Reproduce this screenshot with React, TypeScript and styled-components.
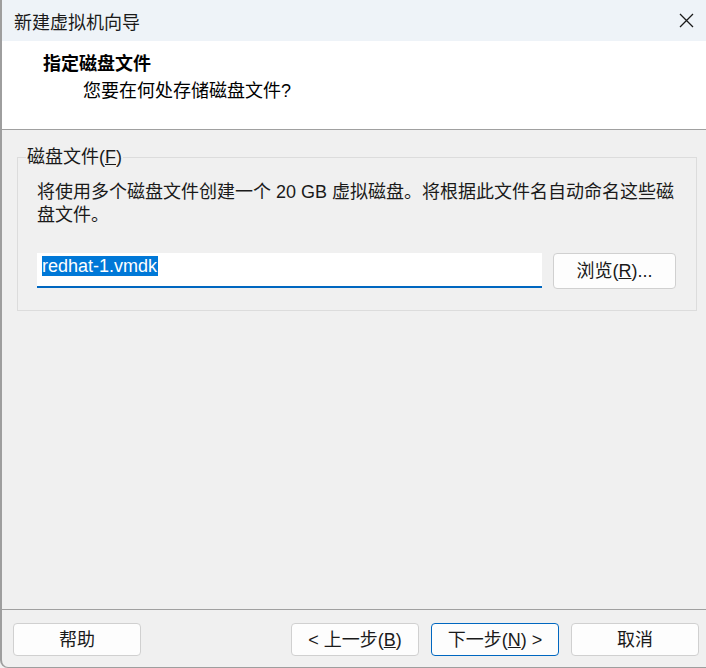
import styled, { createGlobalStyle } from "styled-components";

const GlobalStyle = createGlobalStyle`
  html, body {
    margin: 0;
    padding: 0;
    background: #f0f0f0;
  }
  * {
    box-sizing: border-box;
  }
`;

const Window = styled.div`
  width: 706px;
  height: 668px;
  display: flex;
  flex-direction: column;
  border-left: 2px solid #9e9e9e;
  border-bottom: 1px solid #9e9e9e;
  border-bottom-left-radius: 8px;
  overflow: hidden;
  background: #f0f0f0;
  color: #1a1a1a;
  font-family: "Liberation Sans", "Noto Sans CJK SC", sans-serif;
  font-size: 18px;
`;

const TitleBar = styled.div`
  height: 41px;
  flex: none;
  display: flex;
  align-items: center;
  justify-content: space-between;
  padding: 0 12px 0 12px;
  background: #eef3f8;
  font-family: "Noto Sans CJK SC", sans-serif;
`;

const CloseButton = styled.button`
  border: 0;
  background: none;
  padding: 0;
  width: 16px;
  height: 16px;
  display: flex;
  align-items: center;
  justify-content: center;
  cursor: pointer;
`;

const Header = styled.div`
  height: 89px;
  flex: none;
  background: #ffffff;
  padding: 11px 0 0 41px;
  border-bottom: 1px solid #a0a0a0;
`;

const HeaderTitle = styled.div`
  font-weight: 700;
  line-height: 24px;
  color: #000;
`;

const HeaderSub = styled.div`
  margin: 3px 0 0 40px;
  line-height: 24px;
  color: #000;
`;

const Body = styled.div`
  flex: 1;
  padding: 15px 9px 0 15px;
`;

const GroupBox = styled.fieldset`
  margin: 0;
  padding: 12px 10px 21px 19px;
  border: 1px solid #dcdcdc;
  min-width: 0;
`;

const Legend = styled.legend`
  margin-left: -11px;
  padding: 0 1px;
  line-height: 24px;
`;

const Description = styled.p`
  margin: 0;
  line-height: 23px;
`;

const InputRow = styled.div`
  display: flex;
  gap: 11px;
  margin-top: 26px;
  padding-right: 10px;
`;

const TextField = styled.div`
  flex: 1;
  height: 35px;
  background: #ffffff;
  border-bottom: 2px solid #0067c0;
  padding: 3px 0 0 5px;
  line-height: 21px;
`;

const Selected = styled.span`
  background: #0078d7;
  color: #ffffff;
  padding: 0 1px 0 0;
`;

const Button = styled.button<{ $primary?: boolean; $width?: number }>`
  width: ${({ $width }) => $width ?? 128}px;
  height: ${({ $width }) => ($width ? 36 : 33)}px;
  flex: none;
  border: 1px solid ${({ $primary }) => ($primary ? "#0067c0" : "#d0d0d0")};
  border-radius: 4px;
  background: #fdfdfd;
  color: #1a1a1a;
  font: inherit;
  line-height: 20px;
  padding: 0;
  cursor: pointer;
`;

const Footer = styled.div`
  height: 58px;
  flex: none;
  display: flex;
  align-items: flex-start;
  gap: 12px;
  padding: 13px 7px 0 11px;
  border-top: 1px solid #a0a0a0;
`;

const Spacer = styled.div`
  flex: 1;
`;

export default function App() {
  return (
    <>
      <GlobalStyle />
      <Window>
        <TitleBar>
          <span>新建虚拟机向导</span>
          <CloseButton aria-label="关闭">
            <svg width="15" height="15" viewBox="0 0 15 15">
              <path d="M1 1 L14 14 M14 1 L1 14" stroke="#1a1a1a" strokeWidth="1.3" />
            </svg>
          </CloseButton>
        </TitleBar>
        <Header>
          <HeaderTitle>指定磁盘文件</HeaderTitle>
          <HeaderSub>您要在何处存储磁盘文件?</HeaderSub>
        </Header>
        <Body>
          <GroupBox>
            <Legend>
              磁盘文件(<u>F</u>)
            </Legend>
            <Description>
              将使用多个磁盘文件创建一个 20 GB 虚拟磁盘。将根据此文件名自动命名这些磁盘文件。
            </Description>
            <InputRow>
              <TextField>
                <Selected>redhat-1.vmdk</Selected>
              </TextField>
              <Button $width={123}>
                浏览(<u>R</u>)...
              </Button>
            </InputRow>
          </GroupBox>
        </Body>
        <Footer>
          <Button>帮助</Button>
          <Spacer />
          <Button>
            &lt; 上一步(<u>B</u>)
          </Button>
          <Button $primary>
            下一步(<u>N</u>) &gt;
          </Button>
          <Button>取消</Button>
        </Footer>
      </Window>
    </>
  );
}
